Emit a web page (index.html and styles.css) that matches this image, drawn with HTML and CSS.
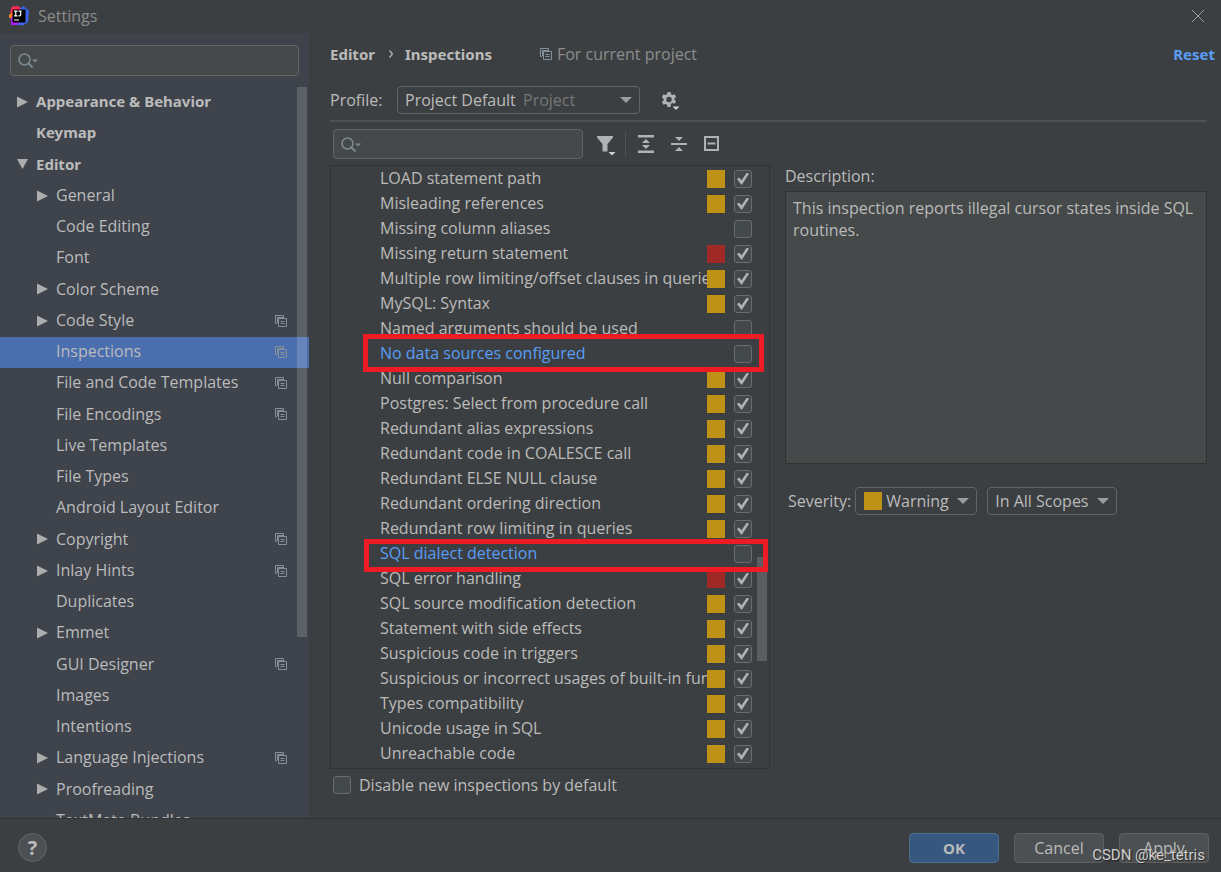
FILE: index.html
```html
<!DOCTYPE html>
<html lang="en">
<head>
<meta charset="utf-8">
<title>Settings</title>
<link rel="stylesheet" href="styles.css">
</head>
<body>
<svg class="defs" aria-hidden="true">
  <symbol id="copy" viewBox="0 0 12 12"><path d="M8.500 2V.5h-8v8H2" fill="none" stroke="currentColor"/><path d="M3.500 3.500h8v8h-8zM5.500 6.500h4M5.500 8.500h4M2.500 8V2.500H9" fill="none" stroke="currentColor"/></symbol>
  <symbol id="right" viewBox="0 0 12 12"><path d="M1 0.500L12 6L1 11.500z" fill="currentColor"/></symbol>
  <symbol id="down" viewBox="0 0 12 12"><path d="M1 1H12L6.500 11z" fill="currentColor"/></symbol>
  <symbol id="caret" viewBox="0 0 12 6"><path d="M0 0H12L6 6z" fill="currentColor"/></symbol>
  <symbol id="search" viewBox="0 0 20 15"><circle cx="6.500" cy="6.500" r="5.500" fill="none" stroke="currentColor" stroke-width="1.500"/><path d="M10.500 10.500L14.500 14.500" stroke="currentColor" stroke-width="2"/><path d="M14 6.500h6l-3 3z" fill="currentColor"/></symbol>
</svg>

<header class="titlebar">
  <svg class="logo" viewBox="0 0 20 20" aria-hidden="true">
    <path d="M3 .5L9.500 0L12 3L3.500 11L1 6z" fill="#fe2857"/>
    <path d="M0 9L3.500 6V14L0 11.500z" fill="#fc801d"/>
    <path d="M2 12L4 10L12 17L10 19L2 19z" fill="#af1df5"/>
    <path d="M11 3L14 0L20 4.500L19 16L14 19.500L7 18.500L15 15z" fill="#3a66ee"/>
    <path d="M3.500 3.500H16.500V16.500H3.500z" fill="#000"/>
    <path d="M5 5.200h3.500M6.750 5.200v4.600M5 9.800h3.500M9.500 5.200h3M11.700 5.200v3.300q0 1.300-1.200 1.300h-1M5 14h5" fill="none" stroke="#fff" stroke-width="1.200"/>
  </svg>
  <span class="title">Settings</span>
  <button class="close" aria-label="Close"><svg viewBox="0 0 12 12"><path d="M0 0L12 12M12 0L0 12" stroke="currentColor"/></svg></button>
</header>

<div class="body">
  <nav class="sidebar" aria-label="Settings categories">
    <div class="search">
      <svg class="search-icon"><use href="#search"/></svg>
      <input class="search-input" type="text" aria-label="Search settings">
    </div>
    <ul class="tree">
      <li class="node top"><svg class="arrow"><use href="#right"/></svg><button class="name">Appearance &amp; Behavior</button></li>
      <li class="node top"><span class="arrow"></span><button class="name">Keymap</button></li>
      <li class="node top"><svg class="arrow"><use href="#down"/></svg><button class="name">Editor</button></li>
      <li class="node"><svg class="arrow"><use href="#right"/></svg><button class="name">General</button></li>
      <li class="node"><span class="arrow"></span><button class="name">Code Editing</button></li>
      <li class="node"><span class="arrow"></span><button class="name">Font</button></li>
      <li class="node"><svg class="arrow"><use href="#right"/></svg><button class="name">Color Scheme</button></li>
      <li class="node"><svg class="arrow"><use href="#right"/></svg><button class="name">Code Style</button><svg class="copy"><use href="#copy"/></svg></li>
      <li class="node selected"><span class="arrow"></span><button class="name">Inspections</button><svg class="copy"><use href="#copy"/></svg></li>
      <li class="node"><span class="arrow"></span><button class="name">File and Code Templates</button><svg class="copy"><use href="#copy"/></svg></li>
      <li class="node"><span class="arrow"></span><button class="name">File Encodings</button><svg class="copy"><use href="#copy"/></svg></li>
      <li class="node"><span class="arrow"></span><button class="name">Live Templates</button></li>
      <li class="node"><span class="arrow"></span><button class="name">File Types</button></li>
      <li class="node"><span class="arrow"></span><button class="name">Android Layout Editor</button></li>
      <li class="node"><svg class="arrow"><use href="#right"/></svg><button class="name">Copyright</button><svg class="copy"><use href="#copy"/></svg></li>
      <li class="node"><svg class="arrow"><use href="#right"/></svg><button class="name">Inlay Hints</button><svg class="copy"><use href="#copy"/></svg></li>
      <li class="node"><span class="arrow"></span><button class="name">Duplicates</button></li>
      <li class="node"><svg class="arrow"><use href="#right"/></svg><button class="name">Emmet</button></li>
      <li class="node"><span class="arrow"></span><button class="name">GUI Designer</button><svg class="copy"><use href="#copy"/></svg></li>
      <li class="node"><span class="arrow"></span><button class="name">Images</button></li>
      <li class="node"><span class="arrow"></span><button class="name">Intentions</button></li>
      <li class="node"><svg class="arrow"><use href="#right"/></svg><button class="name">Language Injections</button><svg class="copy"><use href="#copy"/></svg></li>
      <li class="node"><svg class="arrow"><use href="#right"/></svg><button class="name">Proofreading</button></li>
      <li class="node"><span class="arrow"></span><button class="name">TextMate Bundles</button></li>
      <li class="thumb tree-thumb" aria-hidden="true"></li>
    </ul>
  </nav>

  <main class="content">
    <div class="crumbs">
      <strong>Editor</strong>
      <svg class="chevron" viewBox="0 0 4 8"><path d="M.5 .5L3.500 4L.5 7.500" fill="none" stroke="currentColor" stroke-width="1.200"/></svg>
      <strong>Inspections</strong>
      <span class="scope"><svg class="copy"><use href="#copy"/></svg>For current project</span>
      <a class="reset" href="#">Reset</a>
    </div>

    <div class="profile">
      <label class="profile-label" for="profile">Profile:</label>
      <div class="combo profile-combo">
        <select id="profile"><option>Project Default</option></select>
        <span class="hint">Project</span>
        <svg class="caret"><use href="#caret"/></svg>
      </div>
      <button class="tool gear" aria-label="Profile actions"><svg viewBox="0 0 20 20"><path fill="currentColor" fill-rule="evenodd" d="M6.500 1h3l.5 2.300 1.400.8 2.200-.8 1.500 2.600-1.700 1.500v1.300l1.700 1.500-1.500 2.600-2.200-.8-1.400.8L9.500 16h-3L6 13.700l-1.400-.8-2.200.8L.9 11.100l1.700-1.500V8.300L.9 5.900l1.500-2.600 2.200.8L6 3.300zM8 5.800a2.700 2.700 0 1 0 0 5.400a2.700 2.700 0 1 0 0-5.400z"/><path d="M11.500 15.500h7l-3.500 3.500z" fill="#d0d0d0"/></svg></button>
    </div>

    <div class="columns">
      <section class="left">
        <div class="toolbar">
          <div class="search">
            <svg class="search-icon"><use href="#search"/></svg>
            <input class="search-input" type="text" aria-label="Search inspections">
          </div>
          <button class="tool filter" aria-label="Filter"><svg viewBox="0 0 20 20"><path d="M0 2H16V3.500L10.500 10V17.500H5.500V10L0 3.500z" fill="currentColor"/><path d="M11.500 18h7l-3.500 3.500z" fill="#d0d0d0"/></svg></button>
          <span class="divider"></span>
          <button class="tool" aria-label="Expand all"><svg viewBox="0 0 20 20"><path d="M2 1h16v2.500H2zM2 16.500h16V19H2zM10 5L14 9H6zM10 15L14 11H6z" fill="currentColor"/></svg></button>
          <button class="tool" aria-label="Collapse all"><svg viewBox="0 0 20 20"><path d="M2 9h16v2H2zM10 7L14 3H6zM10 13L14 17H6z" fill="currentColor"/></svg></button>
          <button class="tool" aria-label="Reset to empty"><svg viewBox="0 0 20 20"><path d="M3 3h13v13H3zM5.500 9.500h8" fill="none" stroke="currentColor" stroke-width="2"/></svg></button>
        </div>

        <div class="panel">
          <div class="list">
            <label class="item"><span class="text">LOAD statement path</span><i class="swatch"></i><input type="checkbox" checked></label>
            <label class="item"><span class="text">Misleading references</span><i class="swatch"></i><input type="checkbox" checked></label>
            <label class="item"><span class="text">Missing column aliases</span><input type="checkbox"></label>
            <label class="item"><span class="text">Missing return statement</span><i class="swatch error"></i><input type="checkbox" checked></label>
            <label class="item"><span class="text">Multiple row limiting/offset clauses in querie</span><i class="swatch"></i><input type="checkbox" checked></label>
            <label class="item"><span class="text">MySQL: Syntax</span><i class="swatch"></i><input type="checkbox" checked></label>
            <label class="item"><span class="text">Named arguments should be used</span><input type="checkbox"></label>
            <label class="item changed"><span class="text">No data sources configured</span><input type="checkbox"></label>
            <label class="item"><span class="text">Null comparison</span><i class="swatch"></i><input type="checkbox" checked></label>
            <label class="item"><span class="text">Postgres: Select from procedure call</span><i class="swatch"></i><input type="checkbox" checked></label>
            <label class="item"><span class="text">Redundant alias expressions</span><i class="swatch"></i><input type="checkbox" checked></label>
            <label class="item"><span class="text">Redundant code in COALESCE call</span><i class="swatch"></i><input type="checkbox" checked></label>
            <label class="item"><span class="text">Redundant ELSE NULL clause</span><i class="swatch"></i><input type="checkbox" checked></label>
            <label class="item"><span class="text">Redundant ordering direction</span><i class="swatch"></i><input type="checkbox" checked></label>
            <label class="item"><span class="text">Redundant row limiting in queries</span><i class="swatch"></i><input type="checkbox" checked></label>
            <label class="item changed"><span class="text">SQL dialect detection</span><input type="checkbox"></label>
            <label class="item"><span class="text">SQL error handling</span><i class="swatch error"></i><input type="checkbox" checked></label>
            <label class="item"><span class="text">SQL source modification detection</span><i class="swatch"></i><input type="checkbox" checked></label>
            <label class="item"><span class="text">Statement with side effects</span><i class="swatch"></i><input type="checkbox" checked></label>
            <label class="item"><span class="text">Suspicious code in triggers</span><i class="swatch"></i><input type="checkbox" checked></label>
            <label class="item"><span class="text">Suspicious or incorrect usages of built-in fun</span><i class="swatch"></i><input type="checkbox" checked></label>
            <label class="item"><span class="text">Types compatibility</span><i class="swatch"></i><input type="checkbox" checked></label>
            <label class="item"><span class="text">Unicode usage in SQL</span><i class="swatch"></i><input type="checkbox" checked></label>
            <label class="item"><span class="text">Unreachable code</span><i class="swatch"></i><input type="checkbox" checked></label>
          </div>
          <div class="thumb list-thumb"></div>
          <div class="mark mark-first"></div>
          <div class="mark mark-second"></div>
        </div>

        <label class="disable"><input type="checkbox">Disable new inspections by default</label>
      </section>

      <section class="right">
        <label class="desc-label" for="desc">Description:</label>
        <textarea class="desc" id="desc" readonly>This inspection reports illegal cursor states inside SQL routines.</textarea>
        <div class="severity">
          <label for="severity">Severity:</label>
          <div class="combo">
            <i class="swatch"></i>
            <select id="severity"><option>Warning</option></select>
            <svg class="caret"><use href="#caret"/></svg>
          </div>
          <div class="combo scopes">
            <select aria-label="Scope"><option>In All Scopes</option></select>
            <svg class="caret"><use href="#caret"/></svg>
          </div>
        </div>
      </section>
    </div>
  </main>
</div>

<footer class="footer">
  <button class="help" aria-label="Help">?</button>
  <button class="btn primary">OK</button>
  <button class="btn">Cancel</button>
  <button class="btn">Apply</button>
  <span class="watermark">CSDN @ke_tetris</span>
</footer>
</body>
</html>
```

FILE: styles.css
```css
* { box-sizing: border-box; }

body {
  margin: 0;
  height: 100vh;
  display: flex;
  flex-direction: column;
  overflow: hidden;
  background: #3c3f41;
  color: #bbbbbb;
  font: 16px/22px "Open Sans", "Noto Sans", sans-serif;
}

button, input, select, textarea { font: inherit; color: inherit; margin: 0; }
button { background: none; border: 0; padding: 0; }
svg { display: block; flex: none; }
.defs { position: absolute; width: 0; height: 0; }

.titlebar {
  display: flex;
  align-items: center;
  gap: 9px;
  height: 33px;
  padding: 0 17px 2px 9px;
  color: #8c8c8c;
}
.logo { width: 20px; height: 20px; }
.close { margin-left: auto; color: #a0a0a0; }
.close svg { width: 12px; height: 12px; }

.body { flex: 1; min-height: 0; display: flex; }

.sidebar {
  flex: 0 0 309px;
  display: flex;
  flex-direction: column;
  padding-top: 12px;
  background: #3e434c;
}

.search {
  display: flex;
  align-items: center;
  height: 31px;
  padding: 0 7px;
  background: #45494a;
  border: 1px solid #646464;
  border-radius: 4px;
}
.sidebar .search { margin: 0 10px 11px; }
.search-icon { width: 20px; height: 15px; color: #7d8a90; }
.search-input { flex: 1; min-width: 0; background: none; border: 0; outline: 0; }

.tree {
  position: relative;
  flex: 1;
  min-height: 0;
  margin: 0;
  padding: 0;
  overflow: hidden;
  list-style: none;
}
.node {
  display: flex;
  align-items: center;
  gap: 8px;
  height: 31px;
  padding: 0 22px 2px 36px;
}
.node:nth-child(4n+3) { height: 32px; }
.node .name { flex: 1; padding-bottom: 1px; text-align: left; white-space: nowrap; }
.top { padding-left: 16px; }
.top .name, strong, .reset, .primary { font: bold 15px/22px "Noto Sans", sans-serif; }
.arrow { flex: none; width: 12px; height: 12px; color: #adadad; }
.copy { width: 12px; height: 12px; color: #84919a; }
.selected { background: #4b6eaf; }
.thumb { position: absolute; background: rgba(255, 255, 255, 0.16); }
.tree-thumb { top: 0; right: 2px; width: 10px; height: 550px; }

.content {
  flex: 1;
  min-width: 0;
  display: flex;
  flex-direction: column;
  padding-left: 21px;
}

.crumbs { display: flex; align-items: center; height: 42px; padding: 0 6px 1px 0; }
.chevron { width: 4px; height: 8px; margin: 0 12px 0 14px; }
.scope { display: flex; align-items: center; gap: 5px; margin-left: 48px; color: #8c8c8c; }
.reset { margin-left: auto; color: #589df6; text-decoration: none; }

.profile {
  display: flex;
  align-items: center;
  height: 47px;
  margin-right: 14px;
  padding-top: 5px;
  border-bottom: 2px solid #515151;
}
.profile-label { width: 67px; }
.profile-combo { width: 243px; }
.combo {
  display: flex;
  align-items: center;
  height: 28px;
  padding: 0 7px;
  border: 1px solid #646464;
  border-radius: 4px;
}
.combo select { appearance: none; border: 0; padding: 0; background: none; outline: 0; }
.caret { width: 12px; height: 6px; margin-left: auto; color: #9a9da0; }
.hint { margin-left: 7px; color: #777777; }

.tool svg { width: 20px; height: 20px; overflow: visible; }
.tool { color: #afb1b3; }
.gear { margin-left: 21px; padding-top: 2px; }

.columns {
  flex: 1;
  min-height: 0;
  display: grid;
  grid-template-columns: 440px minmax(0, 1fr);
  column-gap: 15px;
  padding: 7px 14px 20px 0;
}
.left { display: flex; flex-direction: column; min-height: 0; }
.toolbar { display: flex; align-items: center; gap: 13px; padding-left: 3px; margin-bottom: 6px; }
.toolbar .search { width: 250px; height: 30px; }
.filter { margin-left: 1px; }
.divider { width: 1px; height: 26px; margin: 0 -3px 0 -5px; background: #515151; }

.panel {
  position: relative;
  flex: 1;
  min-height: 0;
  border: 1px solid #323232;
}
.list { height: 100%; overflow: hidden; }
.item { display: flex; align-items: center; height: 25px; padding: 0 17px 0 49px; }
.text { flex: 1; min-width: 0; padding-bottom: 1px; white-space: nowrap; }
.changed { color: #589df6; }
.swatch { position: relative; flex: none; width: 18px; height: 18px; margin-right: 9px; background: #be9117; }
.error { background: #9e2927; }

input[type="checkbox"] {
  appearance: none;
  flex: none;
  display: grid;
  place-items: center;
  width: 18px;
  height: 18px;
  background: #43494a;
  border: 1px solid #6b6b6b;
  border-radius: 3px;
}
input[type="checkbox"]:checked::before {
  content: "";
  width: 12px;
  height: 12px;
  background: #b0b0b0;
  clip-path: polygon(0 55%, 17% 42%, 38% 65%, 82% 0, 100% 10%, 42% 100%, 34% 100%);
}

.list-thumb { top: 391px; right: 2px; width: 10px; height: 104px; }
.mark { position: absolute; border: 5px solid #ed1c24; }
.mark-first { top: 168px; left: 32px; right: 5px; height: 38px; }
.mark-second { top: 373px; left: 33px; right: 1px; height: 33px; }

.disable { display: flex; align-items: center; gap: 8px; height: 26px; padding-left: 3px; margin-top: 3px; }

.right { display: flex; flex-direction: column; padding-top: 36px; }
.desc-label { margin-bottom: 4px; }
.desc {
  height: 273px;
  padding: 5px 7px;
  background: #45494a;
  border: 1px solid #323232;
  outline: 0;
  resize: none;
}
.severity { display: flex; align-items: center; margin-top: 23px; padding-left: 3px; }
.severity label { margin-right: 4px; }
.severity .swatch { margin: 0 4px 0 1px; }
.severity .caret { margin-left: 8px; }
.scopes { margin-left: 10px; }

.footer {
  position: relative;
  display: flex;
  align-items: center;
  gap: 15px;
  height: 54px;
  padding: 4px 12px 0 18px;
  border-top: 1px solid #323232;
}
.help {
  width: 29px;
  height: 29px;
  margin-right: auto;
  background: #4c5052;
  border: 1px solid #646768;
  border-radius: 50%;
  font-size: 20px;
  font-weight: bold;
}
.btn {
  width: 90px;
  height: 30px;
  background: #4c5052;
  border: 1px solid #5e6060;
  border-radius: 4px;
}
.primary { background: #365880; border-color: #4c708c; }
.watermark {
  position: absolute;
  right: 16px;
  bottom: 6px;
  color: #d0d0d0;
  font: 15px/22px Roboto, "Liberation Sans", sans-serif;
  text-shadow: 1px 1px 1px #222222;
}
```
